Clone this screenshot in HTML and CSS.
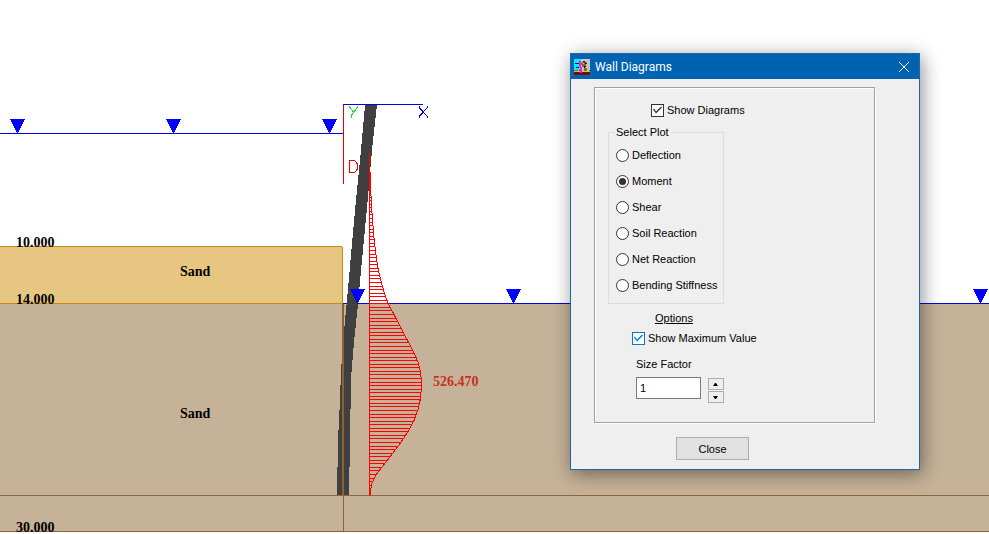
FILE: index.html
```html
<!DOCTYPE html>
<html lang="en">
<head>
<meta charset="utf-8">
<title>Wall Diagrams</title>
<link rel="stylesheet" href="styles.css">
</head>
<body>
<main class="workspace">
  <svg class="model" role="img" aria-label="Wall section with moment diagram">
    <defs>
      <path id="curve" d="M369.500 153.500V495H370C371 483 373 478 382 467S401 443 409 430S421.500 403 421.500 385S416 356 411 347S398 322 388 303C384 293 381 283 378 268C373 240 371 200 370 172Z"/>
      <clipPath id="inside"><use href="#curve"/></clipPath>
      <path id="hatch" d="M369 0H433V1H369ZM369 3H433V4H369ZM369 7H433V8H369ZM369 11H433V12H369ZM369 14H433V15H369ZM369 18H433V19H369ZM369 21H433V22H369ZM369 25H433V26H369ZM369 28H433V29H369Z"/>
      <path id="water" d="M0 0H15V1H14V3H13V5H12V7H11V9H10V11H9V13H8V15H7V13H6V11H5V9H4V7H3V5H2V3H1V1H0Z"/>
    </defs>

    <!-- soil layers -->
    <rect class="clay" x="0" y="304" width="100%" height="228"/>
    <path class="sand" d="M0 246.500H341.500L342.500 247.500V303.500H0"/>
    <line class="level" x1="343" y1="303.500" x2="100%" y2="303.500"/>
    <line class="level" x1="0" y1="133.500" x2="343" y2="133.500"/>
    <line class="bound" x1="0" y1="495.500" x2="100%" y2="495.500"/>
    <line class="bound" x1="0" y1="531.500" x2="100%" y2="531.500"/>
    <line class="bound" x1="343.500" y1="495" x2="343.500" y2="532"/>

    <!-- deflected wall -->
    <path class="wall" d="M365 105H377L372 150L367 208L362 260L358 304L354 342L351 378L350 440L349 495H337L338 440L340 400L341 370L345 320L347 300L350 266L355 210L361 150Z"/>
    <rect class="face" x="342" y="304" width="2" height="191"/>

    <!-- moment diagram -->
    <g class="hatching" clip-path="url(#inside)">
      <use href="#hatch" y="147"/>
      <use href="#hatch" y="179"/>
      <use href="#hatch" y="211"/>
      <use href="#hatch" y="243"/>
      <use href="#hatch" y="275"/>
      <use href="#hatch" y="307"/>
      <use href="#hatch" y="339"/>
      <use href="#hatch" y="371"/>
      <use href="#hatch" y="403"/>
      <use href="#hatch" y="435"/>
      <use href="#hatch" y="467"/>
    </g>
    <use class="moment" href="#curve"/>

    <!-- axes -->
    <path class="axis-x" d="M343 104.500H423M419.500 106V108L427 116V118M427 106V108L419.500 116V118"/>
    <path class="axis-y" d="M349.500 106V107L353.500 112M357.500 106V107L351 116V118"/>
    <path class="axis-d" d="M343.500 105V184M349.500 160.500V172.500H354.500L357.500 169V164L354.500 160.500Z"/>

    <use class="marker" href="#water" x="10" y="119"/>
    <use class="marker" href="#water" x="166" y="119"/>
    <use class="marker" href="#water" x="322" y="119"/>
    <use class="marker" href="#water" x="350" y="289"/>
    <use class="marker" href="#water" x="506" y="289"/>
    <use class="marker" href="#water" x="973" y="289"/>

    <text class="label" x="16" y="247">10.000</text>
    <text class="label" x="16" y="304">14.000</text>
    <text class="label" x="16" y="532">30.000</text>
    <text class="label" x="180" y="276">Sand</text>
    <text class="label" x="180" y="418">Sand</text>
    <text class="label peak" x="433" y="386">526.470</text>
  </svg>

  <section class="dialog" role="dialog" aria-labelledby="dialog-title">
    <header class="titlebar">
      <svg class="app-icon" viewBox="0 0 16 16" aria-hidden="true">
        <path fill="#00eeff" d="M0 0H8V11H0Z"/>
        <path fill="#c5c5c5" d="M7 0H16V11H7Z"/>
        <path fill="#151515" d="M1 4H5V5H1ZM2 8H5V9H2ZM9 2H11V3H12V4H13V5H12V8H11V9H10V8H9Z"/>
        <path fill="#777400" d="M8 3H11V5H12V7H10V8H8ZM0 11H4V12H0ZM10 9H13V12H10Z"/>
        <path fill="#d6bb68" d="M0 12H6V13H0ZM4 11H5V12H4ZM8 11H10V12H16V13H8Z"/>
        <path fill="#711000" d="M0 13H16V16H0Z"/>
        <path fill="#ff13f3" d="M5 2H7V4H8V6H7V8H8V14H6V8H5Z"/>
        <path fill="#e8da63" d="M9 4H10V5H9ZM13 11H15V12H13Z"/>
      </svg>
      <h1 class="title" id="dialog-title">Wall Diagrams</h1>
      <button class="dismiss" type="button" aria-label="Close window">
        <svg class="cross" viewBox="0 0 12 12" aria-hidden="true"><path d="M1 1L11 11M11 1L1 11"/></svg>
      </button>
    </header>
    <form class="content">
      <div class="panel">
        <label class="option show-all"><input type="checkbox" checked>Show Diagrams</label>
        <fieldset class="plots">
          <legend>Select Plot</legend>
          <label class="option plot"><input type="radio" name="plot">Deflection</label>
          <label class="option plot"><input type="radio" name="plot" checked>Moment</label>
          <label class="option plot"><input type="radio" name="plot">Shear</label>
          <label class="option plot"><input type="radio" name="plot">Soil Reaction</label>
          <label class="option plot"><input type="radio" name="plot">Net Reaction</label>
          <label class="option plot"><input type="radio" name="plot">Bending Stiffness</label>
        </fieldset>
        <h2 class="heading">Options</h2>
        <label class="option maximum"><input type="checkbox" checked>Show Maximum Value</label>
        <label class="size-label" for="size">Size Factor</label>
        <div class="size-row">
          <input class="size" id="size" type="text" value="1">
          <div class="spinner">
            <button class="step" type="button" aria-label="Increase"><svg viewBox="0 0 6 3" aria-hidden="true"><path d="M0 3L2 0H3L5 3Z"/></svg></button>
            <button class="step" type="button" aria-label="Decrease"><svg viewBox="0 0 6 3" aria-hidden="true"><path d="M0 0H5L3 3H2Z"/></svg></button>
          </div>
        </div>
      </div>
      <button class="close" type="button">Close</button>
    </form>
  </section>
</main>
</body>
</html>
```
FILE: styles.css
```css
* { box-sizing: border-box; }

body {
  margin: 0;
  background: #fff;
  font: 11px/16px "Liberation Sans", Arial, sans-serif;
  color: #000;
}

.workspace {
  position: relative;
  min-height: 100vh;
  overflow: hidden;
}

.model {
  display: block;
  width: 100%;
  height: 100vh;
  shape-rendering: crispEdges;
}

.clay { fill: #c6b298; }
.sand { fill: #e6c681; stroke: #c78a10; }
.level { stroke: #0000e6; }
.bound { stroke: #8c6539; }
.wall { fill: #404040; }
.face { fill: #8c6230; }
.hatching { fill: #f00; }
.moment { fill: none; stroke: #f00; }
.axis-x { fill: none; stroke: #0000e6; }
.axis-y { fill: none; stroke: #1be01b; }
.axis-d { fill: none; stroke: #e60000; }
.marker { fill: #00f; }
.label { font: bold 14px "Liberation Serif", "Times New Roman", serif; }
.peak { fill: #c9301c; }

.dialog {
  position: absolute;
  left: 570px;
  top: 53px;
  width: 350px;
  border: 1px solid #1c67a8;
  background: #efefef;
  box-shadow: 2px 4px 18px rgba(0, 0, 0, .45);
}

.titlebar {
  display: flex;
  align-items: center;
  height: 25px;
  padding-left: 3px;
  background: #0063b1;
  color: #fff;
}

.app-icon {
  width: 16px;
  height: 16px;
  shape-rendering: crispEdges;
}

.title {
  flex: 1;
  margin: 0 0 0 5px;
  font: 12px/16px Roboto, "Segoe UI", sans-serif;
}

.dismiss {
  display: flex;
  align-items: center;
  justify-content: center;
  width: 30px;
  height: 25px;
  padding: 0;
  border: 0;
  background: none;
}

.cross {
  width: 12px;
  height: 12px;
  fill: none;
  stroke: #fff;
}

.content {
  display: flex;
  flex-direction: column;
  padding: 8px 44px 9px 23px;
}

.panel {
  display: flex;
  flex-direction: column;
  align-items: flex-start;
  padding: 14px 13px 19px;
  border: 1px solid #a0a0a0;
  box-shadow: 1px 1px #fff, inset 1px 1px #fff;
}

.option {
  display: flex;
  align-items: center;
  gap: 3px;
  height: 16px;
  white-space: nowrap;
}

.option input {
  appearance: none;
  display: grid;
  place-items: center;
  flex: none;
  width: 13px;
  height: 13px;
  margin: 0;
  border: 1px solid #333;
  background: #fff;
}

.option input[type="radio"] { border-radius: 50%; }

.option input[type="radio"]:checked::before {
  content: "";
  width: 7px;
  height: 7px;
  border-radius: 50%;
  background: #333;
}

.option input[type="checkbox"]:checked::before {
  content: "";
  width: 11px;
  height: 11px;
  background: #333;
  clip-path: polygon(1px 5px, 2px 4px, 4px 7px, 9px 2px, 10px 3px, 4px 9px);
}

.show-all { margin-left: 43px; }

.plots {
  min-width: 0;
  margin: 7px 0 0;
  padding: 3px 6px 5px 7px;
  border: 1px solid #dcdcdc;
}

.plots legend {
  margin-left: -2px;
  padding: 0 2px;
  line-height: 14px;
}

.option.plot { height: 26px; }

.heading {
  margin: 6px 0 4px 47px;
  font: inherit;
  text-decoration: underline;
}

.maximum { margin-left: 24px; }
.maximum input[type="checkbox"] { border-color: #0078d7; }
.maximum input[type="checkbox"]:checked::before { background: #0078d7; }

.size-label { margin: 10px 0 5px 28px; }

.size-row {
  display: flex;
  align-items: flex-start;
  gap: 7px;
  margin-left: 28px;
}

.size {
  width: 65px;
  height: 22px;
  padding: 0 3px;
  border: 1px solid #7a7a7a;
  border-radius: 0;
  background: #fff;
  font: inherit;
  color: #000;
}

.spinner {
  display: grid;
  gap: 1px;
  padding-top: 1px;
}

.step {
  display: flex;
  align-items: center;
  justify-content: center;
  width: 16px;
  height: 12px;
  padding: 0;
  border: 1px solid #adadad;
  background: #efefef;
}

.step svg {
  width: 6px;
  height: 3px;
}

.close {
  align-self: flex-start;
  width: 73px;
  height: 23px;
  margin: 14px 0 0 82px;
  padding: 0;
  border: 1px solid #adadad;
  background: #e1e1e1;
  font: inherit;
  color: #000;
}
```
